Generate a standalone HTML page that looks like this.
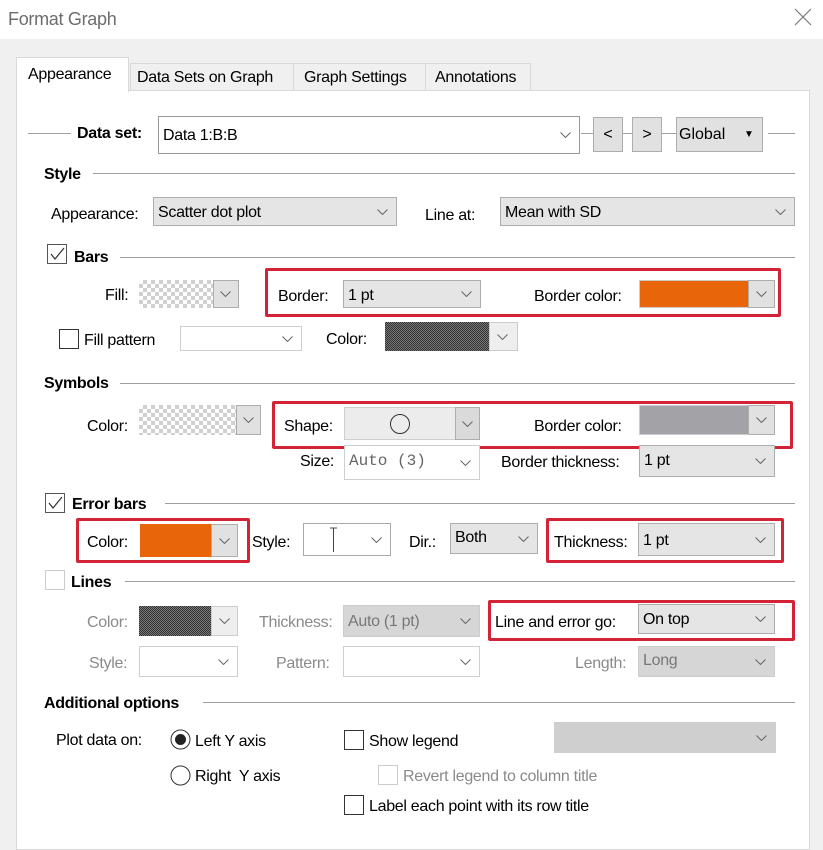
<!DOCTYPE html>
<html><head><meta charset="utf-8"><style>
*{margin:0;padding:0;box-sizing:border-box}
body{width:823px;height:845px;position:relative;overflow:hidden;background:#f0f0f0;font-family:"Liberation Sans",sans-serif;font-size:16px;color:#000}
.a{position:absolute}
.t{position:absolute;line-height:20px;height:20px;white-space:nowrap;letter-spacing:-0.3px;margin-top:2px}
.b{font-weight:bold}
.g{color:#8a8a8a}
.ln{position:absolute;height:1px;background:#a0a0a0}
.c{position:absolute;border:1px solid #adadad;background:#e5e5e5;line-height:29px;padding-left:4px;white-space:nowrap;letter-spacing:-0.3px}
.w{background:#fff;border-color:#cfcfcf}
.ch{position:absolute;right:8px;top:50%;margin-top:-3px;width:11px;height:6px}
.red{position:absolute;border:3px solid #d42336;border-radius:2px}
.chk{position:absolute;width:20px;height:20px;border:1px solid #333;background:#fff}
.checker{background-color:#fff;background-image:linear-gradient(45deg,#d0d0d0 25%,transparent 25%,transparent 75%,#d0d0d0 75%),linear-gradient(45deg,#d0d0d0 25%,transparent 25%,transparent 75%,#d0d0d0 75%);background-size:8px 8px;background-position:0 0,4px 4px}
.dark{background-color:#777;background-image:linear-gradient(45deg,#333 25%,transparent 25%,transparent 75%,#333 75%),linear-gradient(45deg,#333 25%,transparent 25%,transparent 75%,#333 75%);background-size:2px 2px;background-position:0 0,1px 1px}
.ab{position:absolute;border:1px solid #adadad;background:#e1e1e1}
</style></head><body>
<svg width="0" height="0" style="position:absolute"><defs><symbol id="v" viewBox="0 0 11 6"><polyline points="0.5,0.5 5.5,5.5 10.5,0.5" fill="none" stroke="#666" stroke-width="1"/></symbol></defs></svg>

<div class="a" style="left:0;top:0;width:823px;height:39px;background:#fff"></div>
<div class="t" style="left:8px;top:6px;font-size:18px;line-height:22px;color:#6d6d6d">Format Graph</div>
<svg class="a" style="left:794px;top:8px" width="18" height="18"><path d="M1 1L17 17M17 1L1 17" stroke="#777" stroke-width="1.2"/></svg>

<div class="a" style="left:130px;top:63px;width:401px;height:28px;background:#f0f0f0;border:1px solid #d9d9d9;border-bottom:none"></div>
<div class="a" style="left:293px;top:63px;width:1px;height:28px;background:#d9d9d9"></div>
<div class="a" style="left:425px;top:63px;width:1px;height:28px;background:#d9d9d9"></div>
<div class="a" style="left:16px;top:90px;width:794px;height:760px;background:#fff;border:1px solid #d9d9d9"></div>
<div class="a" style="left:16px;top:57px;width:113px;height:35px;background:#fff;border:1px solid #d9d9d9;border-bottom:none"></div>
<div class="t" style="left:28px;top:63px">Appearance</div>
<div class="t" style="left:137px;top:66px">Data Sets on Graph</div>
<div class="t" style="left:304px;top:66px">Graph Settings</div>
<div class="t" style="left:435px;top:66px">Annotations</div>

<div class="ln" style="left:28px;top:133px;width:43px"></div>
<div class="t b" style="left:77px;top:122px">Data set:</div>
<div class="c w" style="left:158px;top:116px;width:422px;height:38px;line-height:38px;border-color:#999">Data 1:B:B<svg class="ch"><use href="#v"/></svg></div>
<div class="ln" style="left:581px;top:133px;width:12px"></div>
<div class="ab" style="left:593px;top:117px;width:30px;height:35px;text-align:center;line-height:33px">&lt;</div>
<div class="ln" style="left:623px;top:133px;width:9px"></div>
<div class="ab" style="left:632px;top:117px;width:30px;height:35px;text-align:center;line-height:33px">&gt;</div>
<div class="ln" style="left:662px;top:133px;width:14px"></div>
<div class="ab" style="left:676px;top:117px;width:87px;height:35px;line-height:33px;padding-left:2px">Global<span style="position:absolute;left:67px;font-size:10px">▼</span></div>
<div class="ln" style="left:768px;top:133px;width:27px"></div>

<div class="t b" style="left:44px;top:163px">Style</div>
<div class="ln" style="left:93px;top:173px;width:702px"></div>
<div class="t" style="left:51px;top:203px">Appearance:</div>
<div class="c" style="left:153px;top:197px;width:244px;height:29px">Scatter dot plot<svg class="ch"><use href="#v"/></svg></div>
<div class="t" style="left:425px;top:204px">Line at:</div>
<div class="c" style="left:500px;top:197px;width:295px;height:29px">Mean with SD<svg class="ch"><use href="#v"/></svg></div>

<div class="chk" style="left:47px;top:244px;border-color:#555"></div>
<svg class="a" style="left:50px;top:247px" width="15" height="14"><polyline points="1,7 5,12 14,1" fill="none" stroke="#333" stroke-width="1.2"/></svg>
<div class="t b" style="left:74px;top:246px">Bars</div>
<div class="ln" style="left:120px;top:257px;width:675px"></div>
<div class="t" style="left:105px;top:284px">Fill:</div>
<div class="a checker" style="left:139px;top:280px;width:75px;height:28px"></div>
<div class="ab" style="left:213px;top:280px;width:26px;height:28px"><svg class="ch" style="right:7px"><use href="#v"/></svg></div>
<div class="red" style="left:265px;top:268px;width:516px;height:49px"></div>
<div class="t" style="left:278px;top:285px">Border:</div>
<div class="c" style="left:343px;top:280px;width:138px;height:28px">1 pt<svg class="ch"><use href="#v"/></svg></div>
<div class="t" style="left:534px;top:285px">Border color:</div>
<div class="a" style="left:639px;top:280px;width:110px;height:28px;background:#e8650a;border:1px solid #ccc"></div>
<div class="ab" style="left:748px;top:280px;width:27px;height:28px"><svg class="ch" style="right:7px"><use href="#v"/></svg></div>

<div class="chk" style="left:59px;top:329px"></div>
<div class="t" style="left:84px;top:329px">Fill pattern</div>
<div class="c w" style="left:180px;top:326px;width:122px;height:25px"><svg class="ch"><use href="#v"/></svg></div>
<div class="t" style="left:326px;top:328px">Color:</div>
<div class="a dark" style="left:385px;top:322px;width:104px;height:29px"></div>
<div class="ab" style="left:489px;top:322px;width:29px;height:29px;background:#eee;border-color:#ccc"><svg class="ch" style="right:9px"><use href="#v"/></svg></div>

<div class="t b" style="left:44px;top:372px">Symbols</div>
<div class="ln" style="left:120px;top:383px;width:675px"></div>
<div class="t" style="left:87px;top:415px">Color:</div>
<div class="a checker" style="left:139px;top:405px;width:98px;height:30px"></div>
<div class="ab" style="left:236px;top:405px;width:25px;height:30px"><svg class="ch" style="right:6px"><use href="#v"/></svg></div>
<div class="red" style="left:272px;top:401px;width:521px;height:48px"></div>
<div class="t" style="left:284px;top:415px">Shape:</div>
<div class="a" style="left:344px;top:407px;width:136px;height:33px;background:#ececec;border:1px solid #cfcfcf"></div>
<div class="ab" style="left:455px;top:407px;width:25px;height:33px;background:#dadada"><svg class="ch" style="right:6px"><use href="#v"/></svg></div>
<svg class="a" style="left:389px;top:413px" width="22" height="22"><circle cx="11" cy="11" r="9.5" fill="none" stroke="#333" stroke-width="1"/></svg>
<div class="t" style="left:534px;top:415px">Border color:</div>
<div class="a" style="left:639px;top:405px;width:110px;height:30px;background:#a3a2a7;border:1px solid #ccc"></div>
<div class="ab" style="left:748px;top:405px;width:27px;height:30px"><svg class="ch" style="right:7px"><use href="#v"/></svg></div>
<div class="t" style="left:300px;top:450px">Size:</div>
<div class="c w" style="left:344px;top:445px;width:136px;height:35px;line-height:31px;font-family:'Liberation Mono',monospace;color:#666;letter-spacing:0">Auto (3)<svg class="ch"><use href="#v"/></svg></div>
<div class="t" style="left:501px;top:451px">Border thickness:</div>
<div class="c" style="left:639px;top:445px;width:136px;height:32px;line-height:29px">1 pt<svg class="ch"><use href="#v"/></svg></div>

<div class="chk" style="left:45px;top:493px;border-color:#555"></div>
<svg class="a" style="left:48px;top:496px" width="15" height="14"><polyline points="1,7 5,12 14,1" fill="none" stroke="#333" stroke-width="1.2"/></svg>
<div class="t b" style="left:72px;top:493px">Error bars</div>
<div class="ln" style="left:165px;top:503px;width:630px"></div>
<div class="red" style="left:76px;top:518px;width:174px;height:45px"></div>
<div class="t" style="left:87px;top:531px">Color:</div>
<div class="a" style="left:140px;top:524px;width:72px;height:33px;background:#e8650a"></div>
<div class="ab" style="left:211px;top:524px;width:27px;height:33px"><svg class="ch" style="right:7px"><use href="#v"/></svg></div>
<div class="t" style="left:252px;top:531px">Style:</div>
<div class="c w" style="left:303px;top:523px;width:88px;height:33px;border-color:#aaa"><svg class="ch"><use href="#v"/></svg></div>
<svg class="a" style="left:329px;top:527px" width="9" height="26"><path d="M1 1H8M4.5 1V25" stroke="#444" stroke-width="1"/></svg>
<div class="t" style="left:409px;top:531px">Dir.:</div>
<div class="c" style="left:450px;top:523px;width:88px;height:31px;line-height:27px">Both<svg class="ch"><use href="#v"/></svg></div>
<div class="red" style="left:546px;top:518px;width:238px;height:45px"></div>
<div class="t" style="left:554px;top:531px">Thickness:</div>
<div class="c" style="left:638px;top:523px;width:137px;height:33px;line-height:33px">1 pt<svg class="ch"><use href="#v"/></svg></div>

<div class="chk" style="left:45px;top:570px;border-color:#ccc"></div>
<div class="t b" style="left:71px;top:571px">Lines</div>
<div class="ln" style="left:125px;top:581px;width:670px"></div>
<div class="t g" style="left:87px;top:611px">Color:</div>
<div class="a dark" style="left:139px;top:606px;width:73px;height:30px"></div>
<div class="ab" style="left:211px;top:606px;width:27px;height:30px;background:#eee;border-color:#ccc"><svg class="ch" style="right:7px"><use href="#v"/></svg></div>
<div class="t g" style="left:259px;top:611px">Thickness:</div>
<div class="c g" style="left:343px;top:605px;width:137px;height:32px;background:#d6d6d6;border-color:#ccc;line-height:31px;color:#777">Auto (1 pt)<svg class="ch"><use href="#v"/></svg></div>
<div class="red" style="left:488px;top:600px;width:307px;height:41px"></div>
<div class="t" style="left:495px;top:611px">Line and error go:</div>
<div class="c" style="left:638px;top:604px;width:137px;height:30px;line-height:30px">On top<svg class="ch"><use href="#v"/></svg></div>
<div class="t g" style="left:89px;top:652px">Style:</div>
<div class="c w" style="left:139px;top:646px;width:99px;height:31px"><svg class="ch"><use href="#v"/></svg></div>
<div class="t g" style="left:276px;top:652px">Pattern:</div>
<div class="c w" style="left:343px;top:646px;width:137px;height:31px"><svg class="ch"><use href="#v"/></svg></div>
<div class="t g" style="left:575px;top:652px">Length:</div>
<div class="c" style="left:638px;top:646px;width:137px;height:31px;background:#d6d6d6;border-color:#ccc;color:#777;line-height:28px">Long<svg class="ch"><use href="#v"/></svg></div>

<div class="t b" style="left:44px;top:692px">Additional options</div>
<div class="ln" style="left:203px;top:702px;width:592px"></div>
<div class="t" style="left:56px;top:729px">Plot data on:</div>
<svg class="a" style="left:170px;top:729px" width="21" height="21"><circle cx="10.5" cy="10.5" r="9.5" fill="#fff" stroke="#333"/><circle cx="10.5" cy="10.5" r="5.5" fill="#222"/></svg>
<div class="t" style="left:195px;top:730px">Left Y axis</div>
<svg class="a" style="left:170px;top:765px" width="21" height="21"><circle cx="10.5" cy="10.5" r="9.5" fill="#fff" stroke="#333"/></svg>
<div class="t" style="left:195px;top:765px">Right&nbsp; Y axis</div>
<div class="chk" style="left:344px;top:730px"></div>
<div class="t" style="left:369px;top:730px">Show legend</div>
<div class="c" style="left:554px;top:722px;width:222px;height:31px;background:#cfcfcf;border-color:#cfcfcf"><svg class="ch"><use href="#v"/></svg></div>
<div class="chk" style="left:378px;top:765px;border-color:#ccc"></div>
<div class="t g" style="left:403px;top:765px">Revert legend to column title</div>
<div class="chk" style="left:344px;top:795px"></div>
<div class="t" style="left:369px;top:795px">Label each point with its row title</div>
</body></html>
